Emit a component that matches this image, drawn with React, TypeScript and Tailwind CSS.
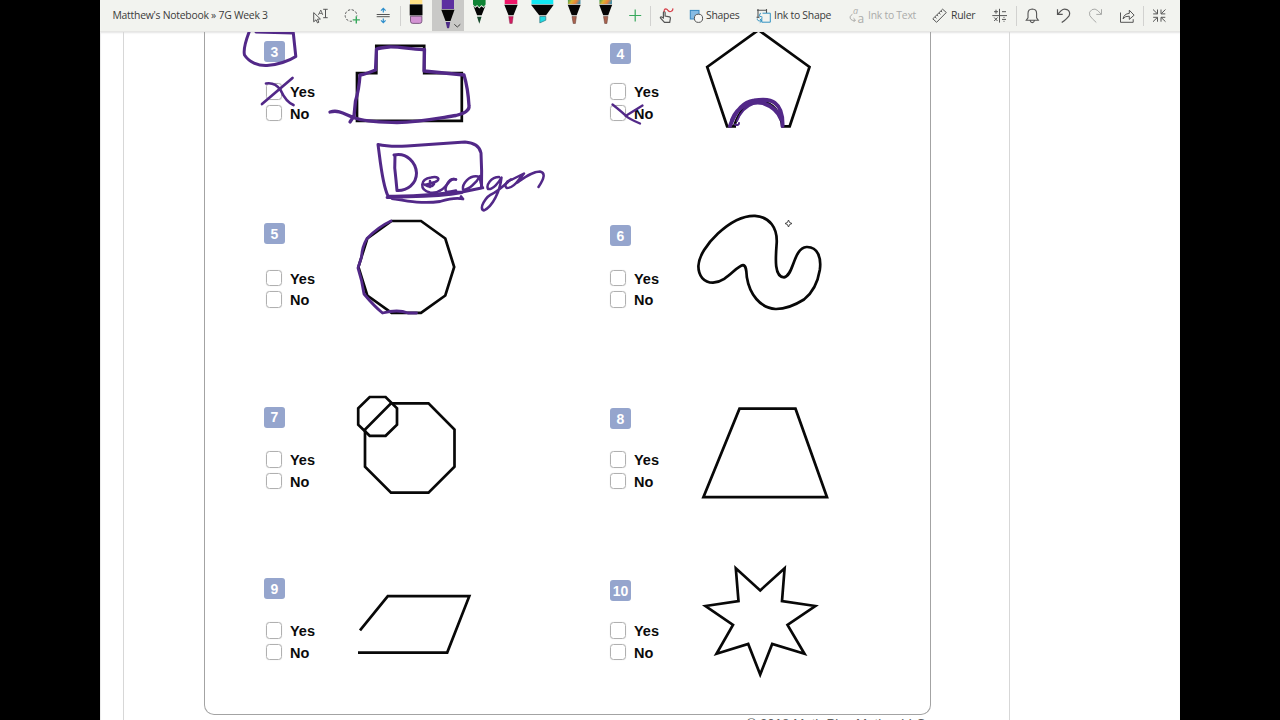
import type { ReactNode } from "react";

/* ---------- Toolbar pieces ---------- */

type IconProps = { className: string; box: string; label: string; children: ReactNode };

function Icon({ className, box, label, children }: IconProps) {
  return (
    <svg
      role="img"
      aria-label={label}
      className={`h-[31px] shrink-0 ${className}`}
      viewBox={box}
      fill="none"
      stroke="#555"
      strokeWidth="1"
    >
      {children}
    </svg>
  );
}

function Separator({ className }: { className: string }) {
  return (
    <div className={`flex h-[31px] shrink-0 items-center justify-center ${className}`}>
      <div className="h-5 w-px bg-[#d2d2d0]" />
    </div>
  );
}

function RainbowPen({ x, id }: { x: number; id: string }) {
  return (
    <g stroke="none" transform={`translate(${x} 0)`}>
      <defs>
        <linearGradient id={id} x1="0" x2="1" y1="0" y2="0.2">
          <stop offset="0" stopColor="#3f9a55" />
          <stop offset="0.35" stopColor="#d8b531" />
          <stop offset="0.7" stopColor="#e8813a" />
          <stop offset="1" stopColor="#4b8fa5" />
        </linearGradient>
      </defs>
      <rect x="-6.3" y="0" width="12.6" height="4" fill={`url(#${id})`} />
      <path d="M-6.5 4.7H6.5L2.5 15.3H-2.5Z" fill="#050505" />
      <path d="M-2.2 16.5H2.2L1.2 23.5H-1Z" fill="#a9614d" stroke="#5d3a33" strokeWidth="0.5" />
    </g>
  );
}

function Toolbar() {
  return (
    <header className="flex h-[32px] shrink-0 items-start overflow-hidden border-b border-[#e6e6e4] bg-[#f2f3ef] font-['Open_Sans','Noto_Sans',sans-serif] text-[10.4px] leading-[31px] tracking-[-0.25px] whitespace-nowrap text-[#3b3b3b]">
      <span className="w-[210px] shrink-0 pl-[12.5px]">Matthew's Notebook » 7G Week 3</span>

      <Icon label="Select" className="w-[28px]" box="310 0 28 31">
        <path d="M313.7 12.6v9.2l2.3-2 1.5 3.1 1.4-.7-1.4-3 2.9-.2Z" />
        <path d="M318.3 15l2.5-5 2 5M319.2 13.4h3" strokeWidth="0.8" />
        <path d="M323.2 9.3h4.5M325.5 9.3v8.4M323.2 17.7h4.5" />
      </Icon>
      <Icon label="Lasso" className="w-[34px]" box="338 0 34 31">
        <circle cx="351" cy="15.5" r="5.8" strokeDasharray="2.4 1.5" />
        <path d="M356 15.8v8M352 19.8h8" stroke="#f2f3ef" strokeWidth="3" />
        <path d="M356.3 16.3v7.2M352.7 19.9h7.2" stroke="#37a85c" strokeWidth="1.4" />
      </Icon>
      <Icon label="Insert space" className="w-[26px]" box="372 0 26 31">
        <path d="M376.7 14.5h13M376.7 16.7h13" />
        <path d="M383.3 12.5V8.5M381 10.7l2.3-2.3 2.3 2.3M383.3 18.5v4M381 20.3l2.3 2.3 2.3-2.3" stroke="#2e8fcc" strokeWidth="1.2" />
      </Icon>
      <Separator className="w-[5px]" />
      <Icon label="Eraser" className="w-[29px]" box="403 0 29 31">
        <g stroke="none">
          <rect x="410" y="0" width="12.3" height="4" fill="#ffe188" />
          <rect x="409.7" y="4.4" width="12.8" height="11" fill="#050505" />
          <path d="M410.5 16.2h11.4v5q0 2.2-2.3 2.2h-6.8q-2.3 0-2.3-2.2Z" fill="#d493d4" stroke="#67466d" strokeWidth="0.8" />
        </g>
      </Icon>
      <button aria-label="Purple pen" className="h-[31px] w-[32px] shrink-0 bg-[#c9c9c7]">
        <svg className="h-[31px] w-[32px]" viewBox="432 0 32 31" fill="none">
          <path d="M441.8 0h12.2v9h-12.2Z" fill="#5c2ea0" />
          <path d="M441.3 9.7h13.2L450.5 21h-5Z" fill="#050505" />
          <path d="M445.7 22h4.5l-1 5.8q-1.2 1-2.2 0Z" fill="#4c2a86" />
          <path d="M454.3 24.3l3 2.7 3-2.7" stroke="#444" />
        </svg>
      </button>
      <Icon label="Pens" className="w-[158px]" box="464 0 158 31">
        <g stroke="none">
          <path d="M473 0h12.6v4.5l-2 2.2-2.1-1.7-2.2 2.2-2.2-2.2-2.1 1.7-2-2.2Z" fill="#0f8335" />
          <path d="M473.2 5.6l1.9 2.3 2.1-1.7 2.1 2.3 2.2-2.3 2.1 1.7 1.9-2.3-3.8 9.7h-4.6Z" fill="#050505" />
          <path d="M477 16.7h4.5l-2.2 7Z" fill="#174a2c" />
          <path d="M504.7 0h12.6v4h-12.6Z" fill="#ee1769" />
          <path d="M504.3 4.7h13.4l-4.2 10.6h-5Z" fill="#050505" />
          <path d="M508.7 16.5h4.5l-1 7h-2.4Z" fill="#d01c60" stroke="#762143" strokeWidth="0.4" />
          <path d="M531.5 0h21.8v4.2h-21.8Z" fill="#13e7f2" />
          <path d="M531 4.8h22.7l-7.6 10.5h-6.9Z" fill="#050505" />
          <path d="M539.8 16.5h6v3.7l-6 2.7Z" fill="#20dbe4" stroke="#347981" strokeWidth="0.7" />
        </g>
        <RainbowPen x={574.2} id="rainbow-one" />
        <RainbowPen x={605.7} id="rainbow-two" />
      </Icon>
      <Icon label="Add pen" className="w-[26px]" box="622 0 26 31">
        <path d="M635.2 9.5v12M629.2 15.5h12" stroke="#37a85c" strokeWidth="1.2" />
      </Icon>
      <Separator className="w-[5px]" />
      <Icon label="Draw with touch" className="w-[34px]" box="653 0 34 31">
        <path d="M663.4 18v-5.5q0-1 .8-1t.9 1v3.6l4.4.8q1.1.3.9 1.4l-.7 4.1h-5.2l-3.7-4q-.8-.9-.1-1.4.6-.4 1.5.3Z" strokeWidth="1.2" />
        <path d="M664.3 12q-.6-3 1.6-3.2 1.6.2 2.1 1.7 1.4 1.6 3.3.8 2-1 1.4-2.9" stroke="#d7424c" strokeWidth="1.2" />
      </Icon>
      <Icon label="Shapes icon" className="w-[19px]" box="687 0 19 31">
        <rect x="690.3" y="10.4" width="8.7" height="8.6" fill="#86bbe3" stroke="#3688c1" />
        <circle cx="698.5" cy="18.3" r="4.1" fill="#f6f7f5" />
      </Icon>
      <span className="w-[48px] shrink-0">Shapes</span>
      <Icon label="Ink to shape icon" className="w-[20px]" box="754 0 20 31">
        <path d="M757 10.3h10M758 9v9M766.5 9v4M756.5 17.3h3" strokeWidth="1.1" />
        <path d="M762.5 13.2h7.8v9h-8.5v-4.5M757.3 18.5q-.4 3.2 4.3 2.2M759.8 18.9l2 1.8-2 1.9M760.6 12.9l-1.5 3 3.4 1.3" stroke="#3393c2" />
      </Icon>
      <span className="w-[73px] shrink-0">Ink to Shape</span>
      <Icon label="Ink to text icon" className="w-[20px]" box="847 0 20 31">
        <g fill="#acacaa" stroke="none" fontFamily="Open Sans, sans-serif">
          <text x="853" y="14" fontSize="9" fontStyle="italic">a</text>
          <text x="857.5" y="22.5" fontSize="12">a</text>
        </g>
        <path d="M852.5 14.2q-4 2.5-1.5 5.3 1.5 1.4 4 .7M853.5 18.2l2 1.9-2 2" stroke="#acacaa" />
      </Icon>
      <span className="w-[62px] shrink-0 pl-px text-[#ababaa]">Ink to Text</span>
      <Icon label="Ruler icon" className="w-[22px]" box="929 0 22 31">
        <path d="M932.8 18.8l9.8-9.6 3.7 3.3-9.7 9.8ZM935 16.9l1.5 1.4M937 14.9l1.2 1.1M939 12.9l1.5 1.4M941 11l1.2 1.1" />
      </Icon>
      <span className="w-[37px] shrink-0">Ruler</span>
      <Icon label="Math" className="w-[26px]" box="988 0 26 31">
        <path d="M999.5 8.8v13.8M992.3 15.6h14.7" />
        <path d="M994 11.7h4M996 9.7v4M1002 11.7h4M994.2 17.5l3.3 3.5M997.5 17.5l-3.3 3.5M1002 19.4h4" />
        <path d="M1003.5 17.4h1M1003.5 21.3h1" />
      </Icon>
      <Separator className="w-[5px]" />
      <Icon label="Notifications" className="w-[32px]" box="1019 0 32 31">
        <path d="M1026.3 20.2h12l-1.7-2.4v-4.4q0-4.2-4.3-4.4-4.3.2-4.3 4.4v4.4ZM1030.2 20.6q.5 2 2.1 2t2.1-2" strokeWidth="1.1" />
      </Icon>
      <Icon label="Undo" className="w-[32px]" box="1051 0 32 31">
        <path d="M1057.5 9.2v5.2h5.2M1057.8 14.2l3.4-3.6q2.6-2.5 5.8-1 3.8 2.2 2.2 6-2 3-7.5 6.9" strokeWidth="1.2" />
      </Icon>
      <Icon label="Redo" className="w-[32px]" box="1083 0 32 31">
        <path d="M1101.5 9.2v5.2h-5.2M1101.2 14.2l-3.4-3.6q-2.6-2.5-5.8-1-3.8 2.2-2.2 6 2 3 6.5 6.9" stroke="#a9aaa8" />
      </Icon>
      <Icon label="Share" className="w-[26px]" box="1115 0 26 31">
        <path d="M1120.5 12.5v9.8h12.7v-3.1M1123 18.8q1-5 6.3-5.4v-3.2l4.8 5-4.8 4.2v-3.2q-4-.4-6.3 2.6Z" />
      </Icon>
      <Separator className="w-[5px]" />
      <Icon label="Exit full screen" className="w-[34px]" box="1146 0 34 31">
        <path d="M1153 9.5l4.3 4.2M1153.2 13.9h4.3V9.5M1165.5 9.5l-4.3 4.2M1165.3 13.9h-4.3V9.5M1153 21.7l4.3-4.2M1153.2 17.3h4.3v4.4M1165.5 21.7l-4.3-4.2M1165.3 17.3h-4.3v4.4" />
      </Icon>
    </header>
  );
}

/* ---------- Worksheet ---------- */

type QuestionData = {
  n: number;
  badge: string;
  options: string;
  box: string;
  size: string;
  shape: ReactNode;
};

const questions: QuestionData[] = [
  {
    n: 3, badge: "pt-[9px]", options: "pt-[21px]", box: "350 32 150 182", size: "h-[182px]",
    shape: <path d="M376.3 45.8h47.9v27.4h37.6v47.6H357V73.2h19.3Z" />,
  },
  {
    n: 4, badge: "pt-[11px]", options: "pt-[19px]", box: "690 32 150 182", size: "h-[182px]",
    shape: <path d="M736 126.3h-8.9L707.2 67 758.5 30l51 37-19.8 59.3h-7.2Q778 102 759 101.5 742 102 734 126.3" />,
  },
  {
    n: 5, badge: "pt-[9px]", options: "pt-[25.5px]", box: "350 214 150 183", size: "h-[183px]",
    shape: <path d="M391.6 221H421l24.3 17.5 8.9 28.5-8.9 28.5-24.3 17.4h-29.4l-24.3-17.4-8.9-28.5 8.9-28.5Z" />,
  },
  {
    n: 6, badge: "pt-[11px]", options: "pt-[23.5px]", box: "690 214 150 183", size: "h-[183px]",
    shape: (
      <path d="M698.4 266C699 247 731 215 755 215.8C770 217 777.5 228 776.7 243C775.8 256 773.5 277 784 277.3C794 276 793 248 806.5 247C818 246.5 821.5 258 819.8 270C817.5 284 811 294 804 299.5C796 304.5 785 309.2 775.5 309C760 308 749.5 294 746.8 277C746.4 271 746.3 265.5 743 265.2C736 266 727 282 713 282.7C704 282.5 698.3 276 698.4 266Z" />
    ),
  },
  {
    n: 7, badge: "pt-[9.5px]", options: "pt-[23.5px]", box: "350 397 150 172", size: "h-[172px]",
    shape: (
      <>
        <path d="M391 403.3h37.5l26 26.2v37.2L428.5 492.6H391l-26-26V429.5Z" />
        <path d="M369.7 397h15.9l11.4 11.4v16.2l-11.4 11.2h-15.9l-11.5-11.2v-16.2Z" />
      </>
    ),
  },
  {
    n: 8, badge: "pt-[11px]", options: "pt-[22px]", box: "690 397 150 172", size: "h-[172px]",
    shape: <path d="M739.5 408.7h56l31.5 88.5H703.4Z" />,
  },
  {
    n: 9, badge: "pt-[9px]", options: "pt-[23px]", box: "350 569 150 145", size: "h-[145px]",
    shape: <path d="M360 630.3L387.8 596.2H469.3L447.2 652.6H358" />,
  },
  {
    n: 10, badge: "pt-[11px]", options: "pt-[21px]", box: "690 569 150 145", size: "h-[145px]",
    shape: (
      <path d="M760.2 590.4L784.6 568.3 782 601.1 815.3 606 787.5 625 804.5 653.8 772.2 644 760.2 674.5 748.2 644 716.5 653.8 733 625 705.5 606 738.5 601.1 735.8 568.3Z" />
    ),
  },
];

function Option({ label }: { label: string }) {
  return (
    <label className="flex h-[21.5px] items-start">
      <span className="h-[16.5px] w-4 shrink-0 rounded-[3.5px] border border-[#b0b0b0] shadow-[0_0_1px_#cfcfcf]" />
      <span className="pl-2 text-[14.5px] leading-[18px] font-bold text-[#0b0b0b]">{label}</span>
    </label>
  );
}

function Question({ q }: { q: QuestionData }) {
  const left = q.n % 2 === 1;
  return (
    <section className="flex items-start">
      <div className={`shrink-0 ${left ? "w-[86px]" : "w-[80px]"} ${q.badge}`}>
        <div className="flex size-[21px] items-center justify-center rounded-[3px] bg-[#95a5cd] text-[14px] leading-none font-bold text-white">
          {q.n}
        </div>
        <div className={`${left ? "pl-[2px]" : ""} ${q.options}`}>
          <Option label="Yes" />
          <Option label="No" />
        </div>
      </div>
      <svg
        className={`w-[150px] shrink-0 overflow-visible ${q.size}`}
        viewBox={q.box}
        fill="none"
        stroke="#080808"
        strokeWidth="2.7"
        strokeMiterlimit="10"
      >
        {q.shape}
      </svg>
    </section>
  );
}

/* Handwritten strokes that lie over the worksheet */
function InkLayer() {
  return (
    <svg
      className="pointer-events-none absolute top-0 -left-px h-[688px] w-[1080px]"
      viewBox="100 32 1080 688"
      fill="none"
      stroke="#522888"
      strokeWidth="3"
      strokeLinecap="round"
      strokeLinejoin="round"
    >
      <path d="M249.5 31C246 40 243 49 244.5 55C249 62 258 66 267 65.5C277 65 289 61 295.8 56.5L293.3 33L256 32" />
      <path strokeWidth="2.7" d="M262 104Q276 92 292.5 78M266 83.5Q275 82 280.5 90Q286 102 293.5 105" />
      <path strokeWidth="3.3" d="M330 112C340 109 347 116 355 118C365 122 381 122 397 122.5C420 122 439 118 456 115.5Q470 112 469 106Q468 88 464 75L424 71L424.5 49.5C412 50 401 46.5 389 47Q379 48 376.5 49L375.5 70Q366 74 360 75Q359 90 355.5 101L354 116L350 122" />
      <path strokeWidth="2.3" d="M612.5 104.5Q622 112 625.5 115.5T640 123.5M642.5 105.5L625.5 116" />
      <path strokeWidth="4" d="M730 126C735 112 743 102 754 100.5C763 99 771 99.5 775 103Q783 109 782.5 126M732 120C737 107 749 101 763 103Q777 108 781 119" />
      <path strokeWidth="2" d="M735 124.5Q739 126 739 123M737 121Q742 108 753 104" />
      {/* Frame round the word */}
      <path d="M378 144.5C380 158 382 184 388 196C410 197 432 194 462 192L481.5 188Q482 171 481 153Q479 143 465 142Q435 144 407 146Q389 147 378 144.5" />
      <path strokeWidth="2.8" d="M387 197.5C407 196 432 198 462 192.5M392 198.5C407 201 422 204 440 201.5Q455 197 463 199L461 196.5" />
      {/* "Decagon" */}
      <path d="M395 155.5Q394 168 396 180L397 190.5M394 155C407 152 416 163 416.5 173C416.5 184 407 191 397 190.5" />
      <path strokeWidth="2.5" d="M425 185L435 182C442 179 437 176 431 177.5C420 179 419 190 430 192.5C440 194 446 186 450 181Q453 178 456 179.5M430 181V187M424.5 184.5Q431 189 434 184" />
      <path strokeWidth="2.5" d="M456 179.5C448 177 444 189 446.5 192Q450 192 456 190.5M478 176.5C469 175 462 184 463 189.5C468 191 477 182 480 176Q480 184 483 188" />
      <path strokeWidth="2.5" d="M499 177C491 177 486 185 488 189C493 190 499 182 501.5 177.5C500 191 493 206 484 210.5C478 209 486 196 493 193.5C501 189 505 184 511 179.5" />
      <path strokeWidth="2.5" d="M512 179.5C505 181 504 187 507 188C514 188 518 180 523.5 174M512 179.5Q517 177 524 173.5L516.5 183C524 178 532 171.5 540 171.5Q548 173 538.5 187" />
      {/* Traced left side of the decagon */}
      <path strokeWidth="2.8" d="M391 221Q378 227 367 238.5Q362 247 361.5 257L358 268Q362 280 364 294Q374 306 382.5 313Q398 309 408 313L416.5 313" />
    </svg>
  );
}

export default function App() {
  return (
    <div className="flex h-[720px] w-[1280px] justify-center overflow-hidden bg-black font-['Liberation_Sans',Arial,sans-serif]">
      <div className="flex w-[1080px] flex-col bg-white">
        <Toolbar />
        <main className="relative flex h-[688px] justify-start overflow-hidden border-l border-[#ececec] pl-[22px] shadow-[inset_0_2px_2px_-1px_#e4e4e4]">
          <article className="w-[887px] shrink-0 border-x border-[#d7d7d7] pl-[79.5px]">
            <div className="h-[683px] w-[727.5px] rounded-b-[10px] border-x border-b border-[#a3a3a3] pl-[59.5px]">
              <div className="grid grid-cols-[346px_230px]">
                {questions.map((q) => (
                  <Question key={q.n} q={q} />
                ))}
              </div>
            </div>
            <footer className="flex w-[722px] justify-end text-[13.3px] leading-[17px] whitespace-nowrap text-[#606060]">
              © 2018 Math Plus Mother LLC
            </footer>
          </article>
          <InkLayer />
          <svg className="pointer-events-none absolute top-[187px] left-[683px] size-[9px]" viewBox="0 0 9 9" fill="white" stroke="#444" strokeWidth="1">
            <path d="M4.5 1L5.6 3.5 8 4.5 5.6 5.5 4.5 8 3.4 5.5 1 4.5 3.4 3.5Z" />
          </svg>
        </main>
      </div>
    </div>
  );
}
